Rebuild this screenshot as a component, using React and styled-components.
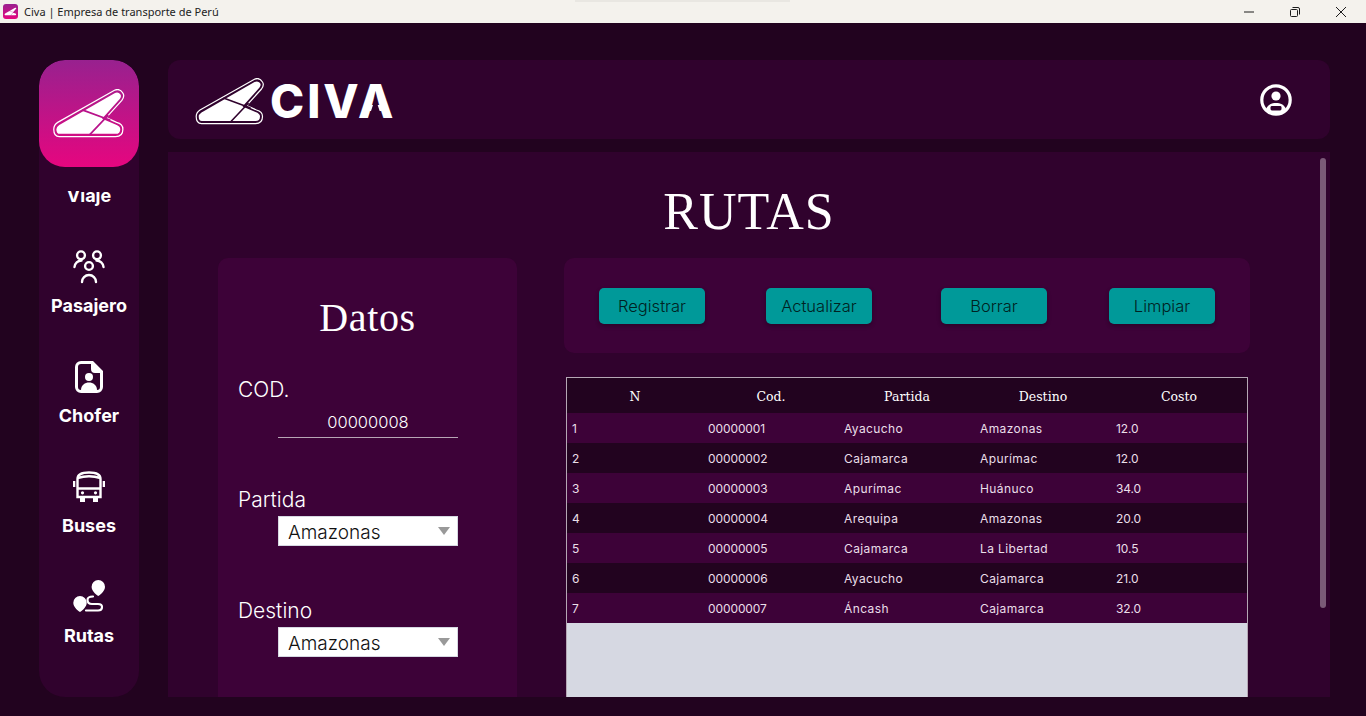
import React from 'react';
import styled, { createGlobalStyle } from 'styled-components';

const GOTHIC = '"Inter", "Noto Sans", sans-serif';
const SERIF = '"Liberation Serif", "DejaVu Serif", serif';

const GlobalStyle = createGlobalStyle`
  html, body {
    margin: 0;
    height: 100%;
    overflow: hidden;
    background: #22031f;
  }
  * {
    box-sizing: border-box;
  }
`;

const Screen = styled.div`
  width: 1366px;
  height: 716px;
  display: flex;
  flex-direction: column;
  background: #22031f;
  overflow: hidden;
`;

const TitleBar = styled.header`
  height: 23px;
  flex: none;
  display: flex;
  align-items: center;
  padding-left: 3px;
  background: linear-gradient(#e9e7e2, #e9e7e2) no-repeat 575px 0 / 215px 2px, #f4f2ed;
  font-family: "Noto Sans", sans-serif;
  font-size: 11px;
  color: #222;
`;

const AppIcon = styled.span`
  width: 15px;
  height: 15px;
  margin-right: 6px;
  border-radius: 3px;
  display: flex;
  align-items: center;
  justify-content: center;
  background: linear-gradient(#9a2190, #e5077f);
`;

const WindowTitle = styled.span`
  flex: 1;
`;

const WindowButton = styled.span`
  width: 46px;
  height: 23px;
  display: flex;
  align-items: center;
  justify-content: center;
  color: #1c1c1c;
`;

const WindowButtons = styled.div`
  display: flex;
  margin-right: 2px;
`;

const Workspace = styled.div`
  flex: 1;
  min-height: 0;
  display: flex;
  gap: 29px;
  padding: 37px 36px 19px 39px;
`;

const Sidebar = styled.aside`
  position: relative;
  width: 100px;
  flex: none;
  padding-top: 131px;
  display: flex;
  flex-direction: column;
  background: #30022d;
  border-radius: 26px;
  overflow: hidden;
`;

const LogoTile = styled.div`
  position: absolute;
  inset: 0 0 auto 0;
  height: 107px;
  display: flex;
  align-items: center;
  justify-content: center;
  border-radius: 26px;
  background: linear-gradient(#98218f, #e6067f);
`;

const NavViewport = styled.nav`
  flex: 1;
  min-height: 0;
  overflow: hidden;
`;

const NavList = styled.ul`
  list-style: none;
  margin: -68px 0 0;
  padding: 0;
  display: flex;
  flex-direction: column;
`;

const NavItem = styled.li`
  height: 110px;
  padding-top: 16px;
  display: flex;
  flex-direction: column;
  align-items: center;
  gap: 10px;
  color: #fff;
`;

const NavIcon = styled.span`
  height: 36px;
  display: flex;
  align-items: center;
  justify-content: center;
`;

const NavLabel = styled.span`
  font-family: ${GOTHIC};
  font-size: 18px;
  line-height: 22px;
  font-weight: 700;
`;

const Main = styled.main`
  flex: 1;
  min-width: 0;
  display: flex;
  flex-direction: column;
  gap: 13px;
`;

const TopBar = styled.div`
  height: 79px;
  flex: none;
  display: flex;
  align-items: center;
  justify-content: space-between;
  padding: 0 38px 0 27px;
  background: #30022d;
  border-radius: 12px;
  color: #fff;
`;

const Brand = styled.div`
  display: flex;
  align-items: center;
  gap: 5px;
  padding-top: 3px;
`;

const Wordmark = styled.span`
  position: relative;
  font-family: "Inter", sans-serif;
  font-weight: 800;
  font-size: 46px;
  line-height: 46px;
  letter-spacing: 3px;
  color: #fff;

  /* the logo's last letter has no crossbar */
  &::after {
    content: '';
    position: absolute;
    right: 14px;
    bottom: 5px;
    width: 14px;
    height: 21px;
    background: #30022d;
    clip-path: polygon(50% 0, 100% 100%, 0 100%);
  }
`;

const Content = styled.section`
  position: relative;
  flex: 1;
  min-height: 0;
  overflow: hidden;
  padding: 30px 50px 0;
  background: #30022d;
`;

const ScrollThumb = styled.div`
  position: absolute;
  top: 6px;
  right: 4px;
  width: 6px;
  height: 450px;
  border-radius: 3px;
  background: #7b5a78;
`;

const PageTitle = styled.h1`
  margin: 0 0 20px;
  height: 56px;
  font-family: ${SERIF};
  font-weight: 400;
  font-size: 52px;
  line-height: 60px;
  letter-spacing: 1px;
  text-align: center;
  color: #fff;
`;

const Columns = styled.div`
  display: flex;
  gap: 47px;
  align-items: flex-start;
`;

const FormCard = styled.div`
  width: 299px;
  height: 470px;
  flex: none;
  padding: 37px 20px 0;
  background: #3d0238;
  border-radius: 10px;
`;

const CardTitle = styled.h2`
  margin: 0 0 37px;
  height: 46px;
  font-family: ${SERIF};
  font-weight: 400;
  font-size: 40px;
  line-height: 46px;
  letter-spacing: 0.6px;
  text-align: center;
  color: #fff;
`;

const Field = styled.div`
  margin-bottom: ${({ $gap }) => $gap}px;
`;

const FieldLabel = styled.label`
  display: block;
  height: 24px;
  margin-bottom: 4px;
  font-family: ${GOTHIC};
  font-size: 21px;
  line-height: 24px;
  font-weight: 300;
  color: #fff;
`;

const CodeInput = styled.input`
  display: block;
  width: 180px;
  height: 32px;
  margin: 0 0 0 40px;
  padding: 0;
  background: transparent;
  border: 0;
  border-bottom: 1px solid #b7a6b5;
  outline: none;
  font-family: ${GOTHIC};
  font-size: 16.5px;
  font-weight: 300;
  text-align: center;
  color: #fff;
`;

const SelectBox = styled.div`
  position: relative;
  width: 180px;
  height: 30px;
  margin-left: 40px;

  &::after {
    content: '';
    position: absolute;
    right: 8px;
    top: 11px;
    border-left: 6px solid transparent;
    border-right: 6px solid transparent;
    border-top: 8px solid #999;
    pointer-events: none;
  }
`;

const Select = styled.select`
  appearance: none;
  width: 100%;
  height: 100%;
  padding: 2px 0 0 9px;
  border: 1px solid #d6d8e2;
  border-radius: 0;
  background: #fff;
  outline: none;
  font-family: ${GOTHIC};
  font-size: 19px;
  font-weight: 300;
  color: #111;
`;

const RightColumn = styled.div`
  width: 686px;
  flex: none;
`;

const ActionCard = styled.div`
  height: 95px;
  margin-bottom: 24px;
  padding: 30px 35px 0;
  display: flex;
  align-items: flex-start;
  background: #3d0238;
  border-radius: 10px;
`;

const ActionButton = styled.button`
  width: 106px;
  height: 36px;
  margin-left: ${({ $offset }) => $offset}px;
  padding: 0;
  border: 0;
  border-radius: 5px;
  background: #009999;
  box-shadow: 0 2px 4px rgba(0, 0, 0, 0.3);
  font-family: ${GOTHIC};
  font-size: 16.5px;
  font-weight: 300;
  color: #022;
`;

const TableFrame = styled.div`
  width: 682px;
  height: 470px;
  margin-left: 2px;
  border: 1px solid #b5a7b4;
  background: #d6d8e2;
`;

const Table = styled.table`
  width: 680px;
  border-collapse: collapse;
  table-layout: fixed;
`;

const HeadRow = styled.tr`
  height: 35px;
  background: #22031f;
`;

const HeadCell = styled.th`
  padding: 2px 0 0;
  font-family: "DejaVu Serif", serif;
  font-size: 12.5px;
  font-weight: 400;
  text-align: center;
  color: #fff;
`;

const Row = styled.tr`
  height: 30px;
  background: ${({ $dark }) => ($dark ? '#22031f' : '#3d0238')};
`;

const Cell = styled.td`
  padding: 0 0 0 5px;
  font-family: ${GOTHIC};
  font-size: 12px;
  font-weight: 400;
  letter-spacing: ${({ $word }) => ($word ? '0.4px' : '-0.1px')};
  color: #eadfe9;
`;

// logo mark, the divider colour changes with the background it sits on
const LogoMark = ({ width, height, divider, outline = true }) => (
  <svg width={width} height={height} viewBox="0 0 69 47" fill="none">
    {outline && (
      <path
        d="M59 1.2 L4.5 32 Q.7 34.5 .7 38.5 Q.7 45.6 6 45.6 H60 Q67 45.6 67 38.5 Q67 33.5 61 32 L51 27.5 L66 11 Q69 7 67 4 Q64 -1 59 1.2 Z"
        stroke="#fff"
        strokeWidth="1.2"
      />
    )}
    <path
      d="M59 4 L6 34.5 Q3.2 36.5 3.2 38.5 Q3.2 43 6.5 43 H60 Q64.5 43 64.5 38.5 Q64.5 35.5 60 34 L47 28.5 L64 9.5 Q66 7 64.5 5 Q62.5 2.5 59 4 Z"
      fill="#fff"
    />
    <path d="M28 20 L55 30 M53 25 L35 44" stroke={divider} strokeWidth="1.6" />
  </svg>
);

const PeopleIcon = () => (
  <svg width="32" height="34" viewBox="0 0 32 34" fill="none" stroke="#fff" strokeWidth="2.4" strokeLinecap="round">
    <circle cx="8" cy="5.3" r="3.9" />
    <circle cx="24" cy="5.3" r="3.9" />
    <circle cx="16" cy="16" r="3.9" />
    <path d="M9 32 a7 7 0 0 1 14 0" />
    <path d="M1.5 17 a7 7 0 0 1 7 -6.5 M30.5 17 a7 7 0 0 0 -7 -6.5" />
  </svg>
);

const DriverIcon = () => (
  <svg width="28" height="32" viewBox="0 0 28 32">
    <path
      fill="#fff"
      fillRule="evenodd"
      d="M6 0 H18 L28 10 V26 a6 6 0 0 1 -6 6 H6 a6 6 0 0 1 -6 -6 V6 a6 6 0 0 1 6 -6 Z M6 3 a3 3 0 0 0 -3 3 V26 a3 3 0 0 0 3 3 H22 a3 3 0 0 0 3 -3 V12 H20 a4 4 0 0 1 -4 -4 V3 Z"
    />
    <circle cx="14" cy="16" r="4" fill="#fff" />
    <path d="M6 29 c0 -5 4 -7.5 8 -7.5 s8 2.5 8 7.5 z" fill="#fff" />
  </svg>
);

const BusIcon = () => (
  <svg width="32" height="32" viewBox="0 0 32 32" fill="none" stroke="#fff" strokeWidth="2.4">
    <path d="M4.5 26 V8 Q4.5 1.5 16 1.5 Q27.5 1.5 27.5 8 V26 Z" />
    <path d="M4.5 7 Q16 3.5 27.5 7 M4.5 17.5 H27.5" />
    <path d="M1 10 V16 M31 10 V16" strokeWidth="2.6" />
    <path d="M7 26 H12 V31 H7 Z M20 26 H25 V31 H20 Z" fill="#fff" stroke="none" />
    <circle cx="9.5" cy="21.8" r="1.6" fill="#fff" stroke="none" />
    <circle cx="22.5" cy="21.8" r="1.6" fill="#fff" stroke="none" />
  </svg>
);

const RouteIcon = () => (
  <svg width="32" height="35" viewBox="0 0 32 35" fill="#fff">
    <path d="M25.3 0 a6.7 6.7 0 0 1 6.7 6.7 c0 4 -3.5 7 -6.7 9.3 c-3.2 -2.3 -6.7 -5.3 -6.7 -9.3 a6.7 6.7 0 0 1 6.7 -6.7 Z" />
    <path d="M7 16 a6.7 6.7 0 0 1 6.7 6.7 c0 4 -3.5 7 -6.7 9.3 c-3.2 -2.3 -6.7 -5.3 -6.7 -9.3 a6.7 6.7 0 0 1 6.7 -6.7 Z" />
    <path
      d="M20 16.5 C16 16.5 14.5 18.5 14.5 20 C14.5 22.5 16.5 24 19 24 H25 C27.5 24 29 25.5 29 27 C29 29.5 27 30.5 25 30.5 H13"
      fill="none"
      stroke="#fff"
      strokeWidth="2.2"
      strokeLinecap="round"
    />
  </svg>
);

const ProfileIcon = () => (
  <svg width="32" height="32" viewBox="0 0 32 32" fill="none">
    <circle cx="16" cy="16" r="14.2" stroke="#fff" strokeWidth="3.2" />
    <circle cx="16" cy="12" r="4.6" fill="#fff" />
    <path d="M6 25 C8 20.5 11.5 19 16 19 S24 20.5 26 25 L22 30 H10 Z" fill="#fff" />
    <rect x="10.5" y="22" width="11" height="4.4" rx="1.4" fill="#30022d" />
  </svg>
);

const navItems = [
  { label: 'Viaje', icon: <BusIcon /> },
  { label: 'Pasajero', icon: <PeopleIcon /> },
  { label: 'Chofer', icon: <DriverIcon /> },
  { label: 'Buses', icon: <BusIcon /> },
  { label: 'Rutas', icon: <RouteIcon /> },
];

const routes = [
  ['1', '00000001', 'Ayacucho', 'Amazonas', '12.0'],
  ['2', '00000002', 'Cajamarca', 'Apurímac', '12.0'],
  ['3', '00000003', 'Apurímac', 'Huánuco', '34.0'],
  ['4', '00000004', 'Arequipa', 'Amazonas', '20.0'],
  ['5', '00000005', 'Cajamarca', 'La Libertad', '10.5'],
  ['6', '00000006', 'Ayacucho', 'Cajamarca', '21.0'],
  ['7', '00000007', 'Áncash', 'Cajamarca', '32.0'],
];

const headers = ['N', 'Cod.', 'Partida', 'Destino', 'Costo'];

const actions = [
  { label: 'Registrar', offset: 0 },
  { label: 'Actualizar', offset: 61 },
  { label: 'Borrar', offset: 69 },
  { label: 'Limpiar', offset: 62 },
];

const App = () => (
  <Screen>
    <GlobalStyle />
    <TitleBar>
      <AppIcon>
        <LogoMark width={13} height={9} divider="#b8128a" outline={false} />
      </AppIcon>
      <WindowTitle>Civa | Empresa de transporte de Perú</WindowTitle>
      <WindowButtons>
        <WindowButton>
          <svg width="10" height="10" viewBox="0 0 10 10" stroke="currentColor"><path d="M0 5 H10" /></svg>
        </WindowButton>
        <WindowButton>
          <svg width="10" height="10" viewBox="0 0 10 10" fill="none" stroke="currentColor">
            <rect x=".5" y="2.5" width="7" height="7" rx="1" />
            <path d="M2.5 .5 H8 A1.5 1.5 0 0 1 9.5 2 V7.5" />
          </svg>
        </WindowButton>
        <WindowButton>
          <svg width="10" height="10" viewBox="0 0 10 10" stroke="currentColor"><path d="M0 0 L10 10 M10 0 L0 10" /></svg>
        </WindowButton>
      </WindowButtons>
    </TitleBar>
    <Workspace>
      <Sidebar>
        <LogoTile>
          <LogoMark width={72} height={49} divider="#b8128a" />
        </LogoTile>
        <NavViewport>
          <NavList>
            {navItems.map(item => (
              <NavItem key={item.label}>
                <NavIcon>{item.icon}</NavIcon>
                <NavLabel>{item.label}</NavLabel>
              </NavItem>
            ))}
          </NavList>
        </NavViewport>
      </Sidebar>
      <Main>
        <TopBar>
          <Brand>
            <LogoMark width={70} height={47} divider="#30022d" />
            <Wordmark>CIVA</Wordmark>
          </Brand>
          <ProfileIcon />
        </TopBar>
        <Content>
          <PageTitle>RUTAS</PageTitle>
          <Columns>
            <FormCard>
              <CardTitle>Datos</CardTitle>
              <Field $gap={50}>
                <FieldLabel>COD.</FieldLabel>
                <CodeInput readOnly value="00000008" />
              </Field>
              <Field $gap={53}>
                <FieldLabel>Partida</FieldLabel>
                <SelectBox>
                  <Select defaultValue="Amazonas"><option>Amazonas</option></Select>
                </SelectBox>
              </Field>
              <Field $gap={0}>
                <FieldLabel>Destino</FieldLabel>
                <SelectBox>
                  <Select defaultValue="Amazonas"><option>Amazonas</option></Select>
                </SelectBox>
              </Field>
            </FormCard>
            <RightColumn>
              <ActionCard>
                {actions.map(action => (
                  <ActionButton key={action.label} $offset={action.offset}>{action.label}</ActionButton>
                ))}
              </ActionCard>
              <TableFrame>
                <Table>
                  <thead>
                    <HeadRow>
                      {headers.map(h => <HeadCell key={h}>{h}</HeadCell>)}
                    </HeadRow>
                  </thead>
                  <tbody>
                    {routes.map((route, i) => (
                      <Row key={route[0]} $dark={i % 2 === 1}>
                        {route.map((value, j) => <Cell key={j} $word={j === 2 || j === 3}>{value}</Cell>)}
                      </Row>
                    ))}
                  </tbody>
                </Table>
              </TableFrame>
            </RightColumn>
          </Columns>
          <ScrollThumb />
        </Content>
      </Main>
    </Workspace>
  </Screen>
);

export default App;
